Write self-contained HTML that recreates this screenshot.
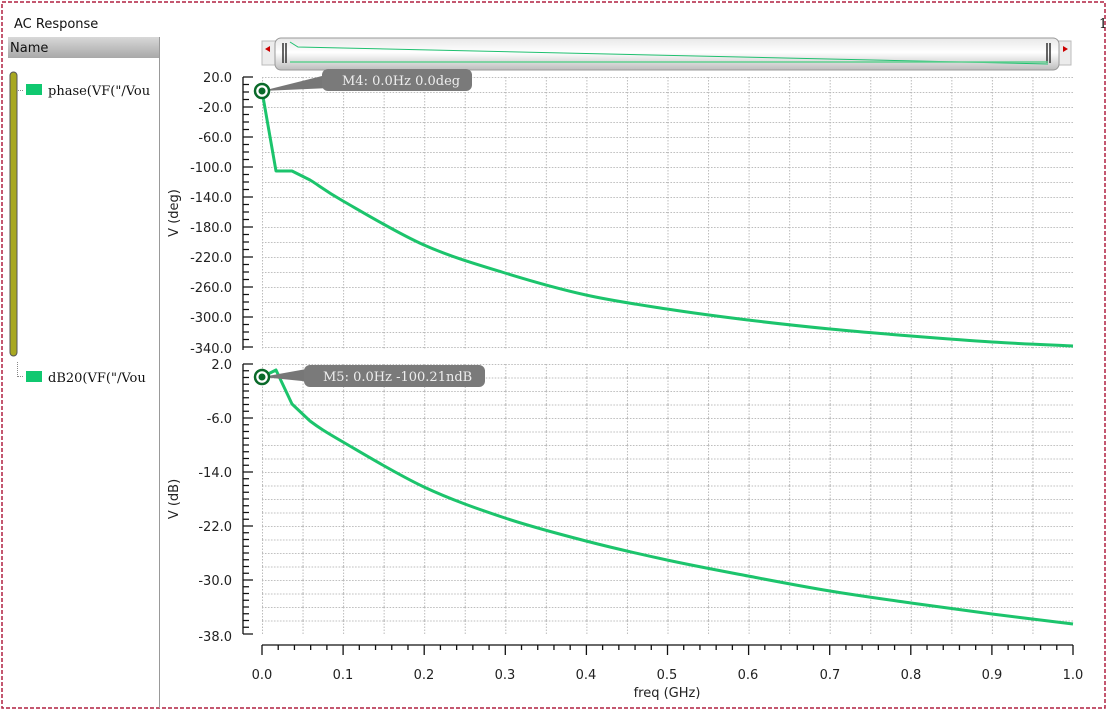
<!DOCTYPE html>
<html><head><meta charset="utf-8"><style>
html,body{margin:0;padding:0;background:#fff;width:1108px;height:712px;overflow:hidden}
svg{display:block;font-family:"DejaVu Serif","Liberation Serif",serif}
</style></head><body>
<svg id="s" width="1108" height="712" viewBox="0 0 1108 712" xmlns="http://www.w3.org/2000/svg">
<defs>
<pattern id="gt" x="262" y="77" width="40.55" height="15" patternUnits="userSpaceOnUse">
<path d="M0.5 0V15M0 0.5H40.55" stroke="#bbb" stroke-width="1" stroke-dasharray="1.5 1.5" fill="none"/></pattern>
<pattern id="gb" x="262" y="364" width="40.55" height="13.5" patternUnits="userSpaceOnUse">
<path d="M0.5 0V13.5M0 0.5H40.55" stroke="#bbb" stroke-width="1" stroke-dasharray="1.5 1.5" fill="none"/></pattern>
<linearGradient id="hd" x1="0" y1="0" x2="0" y2="1"><stop offset="0" stop-color="#d8d8d8"/><stop offset="1" stop-color="#a8a8a8"/></linearGradient>
<linearGradient id="sb" x1="0" y1="0" x2="0" y2="1"><stop offset="0" stop-color="#e8e8e8"/><stop offset=".45" stop-color="#fff"/><stop offset="1" stop-color="#bdbdbd"/></linearGradient>
</defs>
<rect x="2" y="2" width="1103" height="706" fill="none" stroke="#b02040" stroke-width="1.5" stroke-dasharray="4 2"/>
<text x="14" y="28" font-size="13" fill="#111" font-family="DejaVu Sans, Liberation Sans, sans-serif">AC Response</text>
<text x="1099" y="28" font-size="13" fill="#111">1</text>
<rect x="8" y="37" width="151" height="21" fill="url(#hd)"/>
<text x="10" y="52" font-size="13" fill="#111" font-family="DejaVu Sans, Liberation Sans, sans-serif">Name</text>
<line x1="159.5" y1="37" x2="159.5" y2="708" stroke="#999"/>
<rect x="10" y="72" width="7" height="284" rx="3.5" fill="#a8a820" stroke="#555" stroke-width="1"/>
<path d="M18 90.5H24M18 376.5H24M17.5 362V377" stroke="#888" stroke-dasharray="1 1"/>
<rect x="26" y="84" width="16" height="11" fill="#10c870"/>
<text x="48" y="95" font-size="13" fill="#111">phase(VF("/Vou</text>
<rect x="26" y="371" width="16" height="11" fill="#10c870"/>
<text x="48" y="382" font-size="13" fill="#111">dB20(VF("/Vou</text>
<rect x="262" y="41" width="16" height="24" fill="#ececec" stroke="#bbb"/>
<path d="M265 49l5 -3v6z" fill="#c00"/>
<rect x="1055" y="41" width="16" height="24" fill="#ececec" stroke="#bbb"/>
<path d="M1068 49l-5 -3v6z" fill="#c00"/>
<rect x="275" y="38" width="784" height="32" rx="6" fill="url(#sb)" stroke="#999"/>
<path d="M283 43v20M286 43v20M1047 43v20M1050 43v20" stroke="#333" stroke-width="1.5"/>
<path d="M290 42L298 47L1048 64" stroke="#20c070" fill="none"/>
<path d="M290 62H1048" stroke="#60d090" stroke-width="1.5"/>
<rect x="262" y="77" width="811" height="273" fill="url(#gt)"/>
<rect x="262" y="364" width="811" height="270" fill="url(#gb)"/>
<g id="ax" stroke="#111" stroke-width="1.3" fill="none">
<path d="M243 77V350M243 364V634M262 645H1073"/>
</g>
<g font-size="13" fill="#222" text-anchor="end" font-family="DejaVu Sans, Liberation Sans, sans-serif">
<text x="232" y="82">20.0</text><text x="232" y="112">-20.0</text><text x="232" y="142">-60.0</text><text x="232" y="172">-100.0</text><text x="232" y="202">-140.0</text><text x="232" y="232">-180.0</text><text x="232" y="262">-220.0</text><text x="232" y="292">-260.0</text><text x="232" y="322">-300.0</text><text x="232" y="353">-340.0</text>
<text x="232" y="369">2.0</text><text x="232" y="423">-6.0</text><text x="232" y="477">-14.0</text><text x="232" y="531">-22.0</text><text x="232" y="585">-30.0</text><text x="232" y="641">-38.0</text>
</g>
<g font-size="13" fill="#222" text-anchor="middle" font-family="DejaVu Sans, Liberation Sans, sans-serif">
<text x="262" y="679">0.0</text><text x="343" y="679">0.1</text><text x="424" y="679">0.2</text><text x="505" y="679">0.3</text><text x="586" y="679">0.4</text><text x="667" y="679">0.5</text><text x="748" y="679">0.6</text><text x="830" y="679">0.7</text><text x="911" y="679">0.8</text><text x="992" y="679">0.9</text><text x="1073" y="679">1.0</text>
<text x="667" y="697">freq (GHz)</text>
<text transform="translate(178,213) rotate(-90)">V (deg)</text>
<text transform="translate(178,499) rotate(-90)">V (dB)</text>
</g>
<path id="c1" d="M262 91L276 171L292 171L310 180L343 201L424 245L505 273L586 295L667 309L748 320L830 329L911 336L992 342L1073 346" stroke="#1cc46c" stroke-width="3" fill="none" stroke-linejoin="round"/>
<path id="c2" d="M262 377L276 370L292 404L310 421L343 442L424 487L505 518L586 541L667 560L748 576L830 591L911 603L992 614L1073 624" stroke="#1cc46c" stroke-width="3" fill="none" stroke-linejoin="round"/>
<path d="M262 91L330 74V88Z" fill="#777"/>
<rect x="322" y="69" width="150" height="22" rx="6" fill="#7a7a7a"/>
<text x="342" y="85" font-size="13" fill="#eee">M4: 0.0Hz 0.0deg</text>
<circle cx="262" cy="91" r="7" fill="#fff" stroke="#0a6a2a" stroke-width="2.5"/><circle cx="262" cy="91" r="3.5" fill="#0a6a2a"/>
<path d="M262 377L312 368V382Z" fill="#777"/>
<rect x="304" y="365" width="181" height="22" rx="6" fill="#7a7a7a"/>
<text x="323" y="381" font-size="13" fill="#eee">M5: 0.0Hz -100.21ndB</text>
<circle cx="262" cy="377" r="7" fill="#fff" stroke="#0a6a2a" stroke-width="2.5"/><circle cx="262" cy="377" r="3.5" fill="#0a6a2a"/>
</svg>
<script>
var ax=document.getElementById('ax'),d='';
for(var y=77;y<=350.1;y+=7.5){d+='M243 '+y+'h'+((Math.round((y-77)/7.5)%4==0)?10:6);}
for(var y=364;y<=634.1;y+=6.75){d+='M243 '+y+'h'+((Math.round((y-364)/6.75)%8==0)?10:6);}
for(var i=0;i<=50;i++){var x=262+i*16.22;d+='M'+x+' 645v'+(i%5==0?10:5);}
var p=document.createElementNS('http://www.w3.org/2000/svg','path');p.setAttribute('d',d);ax.appendChild(p);
function smooth(id,start){var el=document.getElementById(id);var nums=el.getAttribute('d').match(/-?[\d.]+/g).map(Number);var P=[];for(var i=0;i<nums.length;i+=2)P.push([nums[i],nums[i+1]]);
var s='M'+P[0];for(var i=1;i<P.length;i++){if(i<start){s+='L'+P[i];continue;}var p0=P[i-2]||P[i-1],p1=P[i-1],p2=P[i],p3=P[i+1]||P[i];
s+='C'+(p1[0]+(p2[0]-p0[0])/6)+' '+(p1[1]+(p2[1]-p0[1])/6)+' '+(p2[0]-(p3[0]-p1[0])/6)+' '+(p2[1]-(p3[1]-p1[1])/6)+' '+p2[0]+' '+p2[1];}
el.setAttribute('d',s);}
smooth('c1',4);smooth('c2',4);
</script>
</body></html>
